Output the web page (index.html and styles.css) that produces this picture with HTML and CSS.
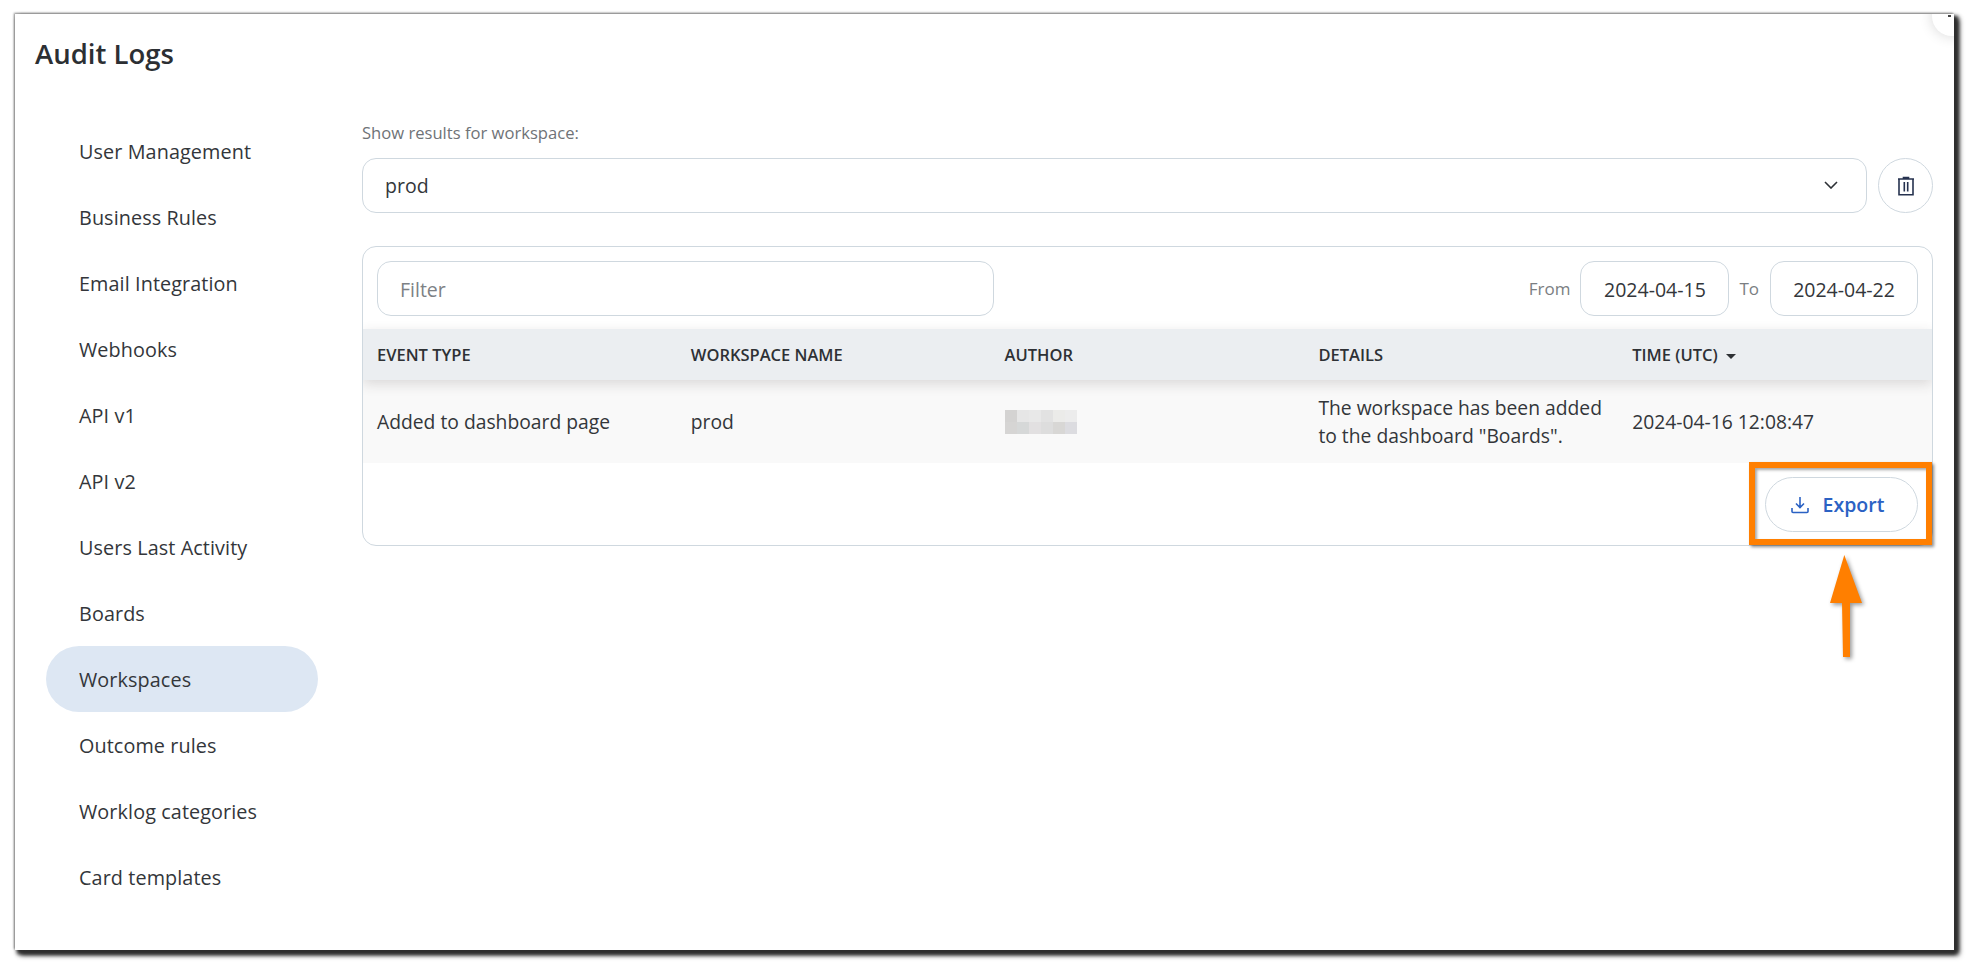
FILE: index.html
```html
<!DOCTYPE html>
<html lang="en">
<head>
<meta charset="utf-8">
<title>Audit Logs</title>
<link rel="stylesheet" href="styles.css">
</head>
<body>
<div class="window">
  <div class="close-corner"></div>
  <span class="close-mark"></span>
  <h1 class="title">Audit Logs</h1>
  <div class="layout">
    <nav class="sidebar">
      <a class="nav-item">User Management</a>
      <a class="nav-item">Business Rules</a>
      <a class="nav-item">Email Integration</a>
      <a class="nav-item">Webhooks</a>
      <a class="nav-item">API v1</a>
      <a class="nav-item">API v2</a>
      <a class="nav-item">Users Last Activity</a>
      <a class="nav-item">Boards</a>
      <a class="nav-item active">Workspaces</a>
      <a class="nav-item">Outcome rules</a>
      <a class="nav-item">Worklog categories</a>
      <a class="nav-item">Card templates</a>
    </nav>
    <main class="content">
      <div class="field-label">Show results for workspace:</div>
      <div class="select-row">
        <div class="select">
          <span>prod</span>
          <svg class="chevron" width="14" height="8" viewBox="0 0 14 8"><path d="M1 1l6 6 6-6" fill="none" stroke="#2d3136" stroke-width="1.6"/></svg>
        </div>
        <button class="round-btn" aria-label="Delete">
          <svg width="18" height="20" viewBox="0 0 18 20"><path d="M1 3h16M6.500 3V1.500h5V3M2 3v15.700h14V3M7.300 6v9.500M10.700 6v9.500" fill="none" stroke="#26324f" stroke-width="1.6"/></svg>
        </button>
      </div>
      <section class="card">
        <div class="toolbar">
          <div class="input filter">Filter</div>
          <div class="dates">
            <span class="date-label">From</span>
            <div class="input date">2024-04-15</div>
            <span class="date-label">To</span>
            <div class="input date date-last">2024-04-22</div>
          </div>
        </div>
        <div class="row head">
          <div>EVENT TYPE</div>
          <div>WORKSPACE NAME</div>
          <div>AUTHOR</div>
          <div>DETAILS</div>
          <div class="sorted">TIME (UTC)<span class="caret"></span></div>
        </div>
        <div class="row body-row">
          <div>Added to dashboard page</div>
          <div>prod</div>
          <div>
            <svg class="blur" width="72" height="24" viewBox="0 0 6 2" shape-rendering="crispEdges">
              <rect x="0" y="0" width="1" height="1" fill="#d4d3d2"/><rect x="1" y="0" width="1" height="1" fill="#e6e6e6"/><rect x="2" y="0" width="1" height="1" fill="#e8e8e8"/><rect x="3" y="0" width="1" height="1" fill="#e2e2e2"/><rect x="4" y="0" width="1" height="1" fill="#ebebe9"/><rect x="5" y="0" width="1" height="1" fill="#ececec"/>
              <rect x="0" y="1" width="1" height="1" fill="#d6d5d4"/><rect x="1" y="1" width="1" height="1" fill="#d6d8d8"/><rect x="2" y="1" width="1" height="1" fill="#e2e0e1"/><rect x="3" y="1" width="1" height="1" fill="#dddddd"/><rect x="4" y="1" width="1" height="1" fill="#d8d7d5"/><rect x="5" y="1" width="1" height="1" fill="#dcdce0"/>
            </svg>
          </div>
          <div>The workspace has been added<br>to the dashboard "Boards".</div>
          <div>2024-04-16 12:08:47</div>
        </div>
        <div class="card-foot">
          <button class="export">
            <svg width="18" height="18" viewBox="0 0 18 18"><path d="M9 1v10M5 7.500l4 4 4-4M1 12v3.500a1 1 0 0 0 1 1h14a1 1 0 0 0 1-1V12" fill="none" stroke="#2b62c4" stroke-width="1.6"/></svg>
            <span>Export</span>
          </button>
        </div>
      </section>
    </main>
  </div>
  <div class="highlight"></div>
  <svg class="arrow" width="40" height="110" viewBox="0 0 40 110"><path d="M18.300 1L4 49h12l1 54h7V49h12z" fill="#ff7f00"/></svg>
</div>
</body>
</html>
```
FILE: styles.css
```css
* { box-sizing: border-box; }
html, body { margin: 0; height: 100%; background: #fff; overflow: hidden; }
body { font-family: "Open Sans", "Noto Sans", sans-serif; color: #33363a; padding: 14px 26px 27px 15px; }
.window {
  position: relative;
  height: 936px;
  background: #fff;
  box-shadow: 5px 5px 5px #2e2e2e, 4px 2px 4px #2e2e2e, 2px 4px 4px #2e2e2e, -1px -1px 2px #8a8a8a;
}
.close-corner {
  position: absolute; top: -18px; right: -18px; width: 40px; height: 40px; border-radius: 50%;
  background: #fff; box-shadow: 0 0 14px rgba(0,0,0,.16);
  clip-path: inset(18px 18px -20px -20px);
}
.close-mark { position: absolute; top: 1px; right: 3px; width: 3px; height: 2px; background: #444; }
.title { margin: 0; padding: 21px 0 0 20px; font-size: 27.500px; line-height: 38px; font-weight: 600; color: #2c2f33; height: 104px; }
.layout { display: flex; }
.sidebar { width: 347px; padding-left: 31px; flex: none; }
.nav-item { display: flex; align-items: center; width: 272px; height: 66px; padding-left: 33px; border-radius: 33px; font-size: 19.800px; letter-spacing: .1px; }
.nav-item.active { background: #dde7f3; }
.content { width: 1571px; flex: none; }
.field-label { height: 40px; padding-top: 4px; font-size: 16.600px; line-height: 22px; color: #6f7377; }
.select-row { display: flex; gap: 11px; }
.select { flex: 1; height: 55px; display: flex; align-items: center; justify-content: space-between; padding: 0 28px 1px 22px; border: 1px solid #cfd8df; border-radius: 14px; font-size: 19.500px; }
.round-btn { width: 55px; height: 55px; flex: none; border: 1px solid #cfd8df; border-radius: 50%; background: #fff; padding: 0; display: flex; align-items: center; justify-content: center; }
.card { margin-top: 33px; height: 300px; border: 1px solid #cfd8df; border-radius: 14px; overflow: hidden; position: relative; }
.toolbar { height: 82px; display: flex; justify-content: space-between; padding: 14px 14px 0; }
.input { height: 55px; border: 1px solid #cfd8df; border-radius: 14px; display: flex; align-items: center; font-size: 19.500px; background: #fff; padding-top: 1px; }
.filter { width: 617px; padding-left: 22px; color: #7d8185; }
.dates { display: flex; align-items: center; height: 55px; }
.date { width: 149px; justify-content: center; }
.date-last { width: 148px; }
.date-label { font-size: 17px; color: #7a7e82; margin: 0 10px; }
.date-label:nth-child(3) { margin-right: 11px; }
.row { display: grid; grid-template-columns: repeat(5, 1fr); align-items: center; }
.row > div { padding-left: 14px; }
.head { height: 51px; background: #ebeef1; font-size: 16.500px; font-weight: 600; color: #2e3135; box-shadow: 0 4px 12px rgba(60,50,50,.16); position: relative; }
.body-row { height: 83px; background: #f9f9f9; font-size: 19.300px; line-height: 28px; }
.blur { display: block; }
.caret { display: inline-block; margin-left: 8px; border: 5px solid transparent; border-top-color: #2e3135; border-bottom-width: 0; vertical-align: middle; }
.card-foot { display: flex; justify-content: flex-end; padding: 14px 14px 0 0; }
.export { width: 153px; height: 55px; border: 1px solid #cfd8df; border-radius: 28px; background: #fff; display: flex; align-items: center; justify-content: center; gap: 14px; font: 600 19.500px "Open Sans", sans-serif; color: #2b62c4; padding: 0 8px 0 0; }
.highlight { position: absolute; left: 1734px; top: 448px; width: 183px; height: 83px; border: 6.500px solid #ff7f00; box-shadow: 2px 2px 3px rgba(0,0,0,.45), inset 2px 2px 3px rgba(0,0,0,.35); }
.arrow { position: absolute; left: 1811px; top: 540px; filter: drop-shadow(2px 2px 2px rgba(0,0,0,.4)); }
```
